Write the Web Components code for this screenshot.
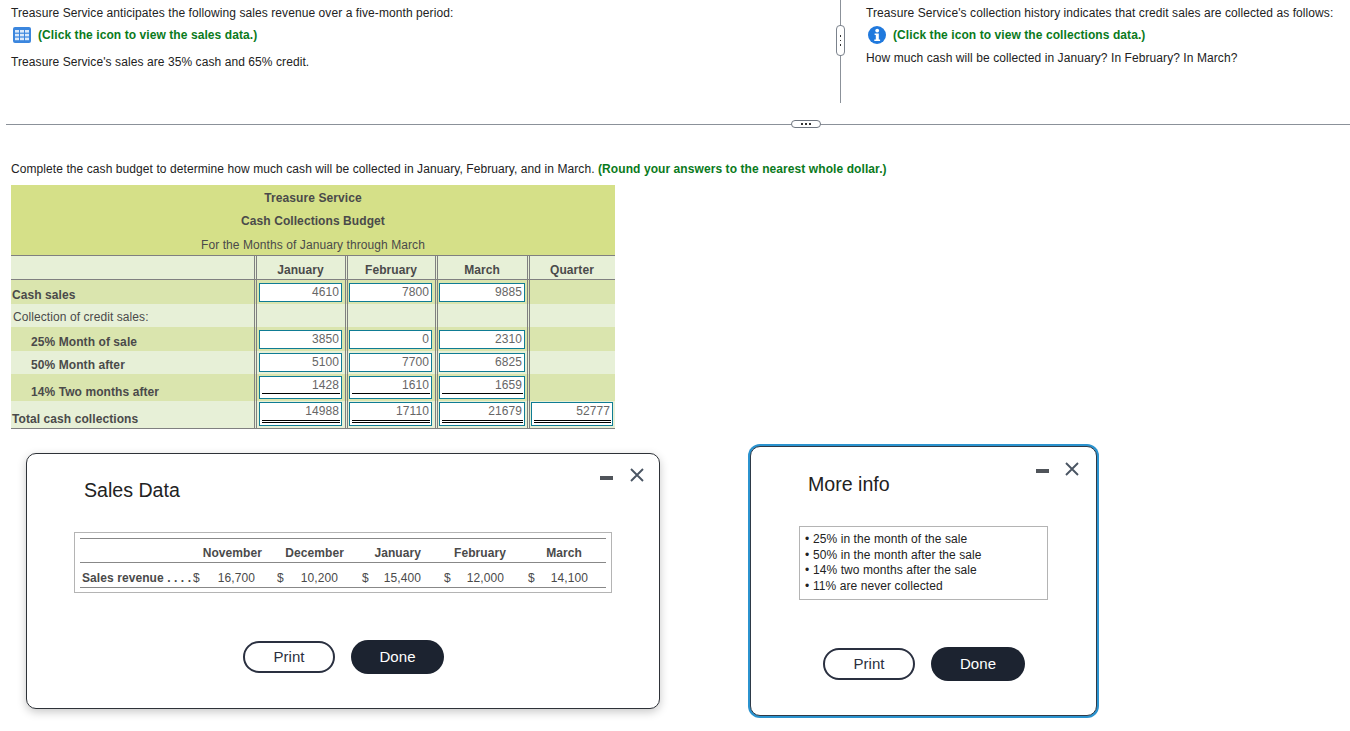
<!DOCTYPE html>
<html><head><meta charset="utf-8"><title>Cash Collections Budget</title>
<style>
html,body{margin:0;padding:0;background:#fff;font:12px/14px "Liberation Sans",Arial,sans-serif;letter-spacing:.08px;color:#222;overflow:hidden}
</style></head><body>
<ts-app>
  <ts-top>
    <ts-pane slot="left" style="--pl:11px">
      <ts-line>Treasure Service anticipates the following sales revenue over a five-month period:</ts-line>
      <ts-hint icon="table" style="--mt:6px;--gap:7px;--il:2px">(Click the icon to view the sales data.)</ts-hint>
      <ts-line style="--mt:12px">Treasure Service's sales are 35% cash and 65% credit.</ts-line>
    </ts-pane>
    <ts-pane slot="right" style="--pl:25px">
      <ts-line>Treasure Service's collection history indicates that credit sales are collected as follows:</ts-line>
      <ts-hint icon="info" style="--mt:6px;--gap:7px;--il:2px">(Click the icon to view the collections data.)</ts-hint>
      <ts-line style="--mt:8px">How much cash will be collected in January? In February? In March?</ts-line>
    </ts-pane>
  </ts-top>
  <ts-splitter></ts-splitter>
  <ts-instruction>Complete the cash budget to determine how much cash will be collected in January, February, and in March. <b slot="note">(Round your answers to the nearest whole dollar.)</b></ts-instruction>
  <ts-budget>
    <b slot="company">Treasure Service</b>
    <b slot="name">Cash Collections Budget</b>
    <span slot="period">For the Months of January through March</span>
    <ts-row tone="light" line style="--h:24px">
      <ts-label></ts-label><ts-cell head>January</ts-cell><ts-cell head>February</ts-cell><ts-cell head>March</ts-cell><ts-cell head>Quarter</ts-cell>
    </ts-row>
    <ts-row tone="dark" style="--h:24px">
      <ts-label bold>Cash sales</ts-label>
      <ts-cell first><ts-amount>4610</ts-amount></ts-cell><ts-cell><ts-amount>7800</ts-amount></ts-cell><ts-cell wide><ts-amount>9885</ts-amount></ts-cell><ts-cell></ts-cell>
    </ts-row>
    <ts-row tone="light" style="--h:23px">
      <ts-label style="--pl:2px;--pb:3px">Collection of credit sales:</ts-label>
      <ts-cell></ts-cell><ts-cell></ts-cell><ts-cell></ts-cell><ts-cell></ts-cell>
    </ts-row>
    <ts-row tone="dark" style="--h:24px">
      <ts-label bold style="--pl:20px">25% Month of sale</ts-label>
      <ts-cell first><ts-amount style="--mt:3px">3850</ts-amount></ts-cell><ts-cell><ts-amount style="--mt:3px">0</ts-amount></ts-cell><ts-cell wide><ts-amount style="--mt:3px">2310</ts-amount></ts-cell><ts-cell></ts-cell>
    </ts-row>
    <ts-row tone="light" style="--h:23px">
      <ts-label bold style="--pl:20px">50% Month after</ts-label>
      <ts-cell first><ts-amount style="--mt:2px">5100</ts-amount></ts-cell><ts-cell><ts-amount style="--mt:2px">7700</ts-amount></ts-cell><ts-cell wide><ts-amount style="--mt:2px">6825</ts-amount></ts-cell><ts-cell></ts-cell>
    </ts-row>
    <ts-row tone="dark" style="--h:27px">
      <ts-label bold style="--pl:20px">14% Two months after</ts-label>
      <ts-cell first><ts-amount rule="single">1428</ts-amount></ts-cell><ts-cell><ts-amount rule="single">1610</ts-amount></ts-cell><ts-cell wide><ts-amount rule="single">1659</ts-amount></ts-cell><ts-cell></ts-cell>
    </ts-row>
    <ts-row tone="light" line style="--h:28px">
      <ts-label bold style="--pb:3px">Total cash collections</ts-label>
      <ts-cell first><ts-amount rule="double">14988</ts-amount></ts-cell><ts-cell><ts-amount rule="double">17110</ts-amount></ts-cell><ts-cell wide><ts-amount rule="double">21679</ts-amount></ts-cell><ts-cell wide><ts-amount rule="double">52777</ts-amount></ts-cell>
    </ts-row>
  </ts-budget>

  <ts-dialog heading="Sales Data" style="--x:26px;--y:453px;--w:634px;--h:256px;--title-l:57px;--title-t:24px;--dash-x:573px;--dash-y:22px;--close-x:603px;--close-y:14px;--body-t:78px;--body-l:47px;--foot-t:186px;--foot-l:216px;--done-w:93px">
    <ts-sales></ts-sales>
  </ts-dialog>
  <ts-dialog focused heading="More info" style="--x:750px;--y:446px;--w:347px;--h:270px;--title-l:57px;--title-t:25px;--dash-x:285px;--dash-y:22px;--close-x:314px;--close-y:15px;--body-t:79px;--body-l:48px;--foot-t:200px;--foot-l:72px;--done-w:94px">
    <ts-notes>
      <li>25% in the month of the sale</li>
      <li>50% in the month after the sale</li>
      <li>14% two months after the sale</li>
      <li>11% are never collected</li>
    </ts-notes>
  </ts-dialog>
</ts-app>
<script>
const def=(name,css,html,extra)=>{
  customElements.define(name,class extends HTMLElement{
    constructor(){super();const r=this.attachShadow({mode:'open'});r.innerHTML=`<style>${css}</style>${typeof html==='function'?html(this):html}`;}
    connectedCallback(){extra&&extra(this)}
  });
};
def('ts-app',`:host{display:block;position:relative;width:1350px;height:731px;overflow:hidden}`,`<slot></slot>`);
def('ts-top',`:host{display:flex;height:103px}
 .l{width:840px;flex:none}.d{width:1px;background:#8b9199;position:relative;flex:none}
 .h{position:absolute;left:-4px;top:25px;width:7px;height:29px;border:1px solid #7b828c;border-radius:4px;background:#fff;display:flex;flex-direction:column;align-items:center;justify-content:center;gap:3px}
 .h i{width:1.5px;height:1.5px;background:#333;display:block}
 .r{flex:1}`,
 `<div class="l"><slot name="left"></slot></div><div class="d"><div class="h"><i></i><i></i><i></i></div></div><div class="r"><slot name="right"></slot></div>`);
def('ts-pane',`:host{display:block;padding:6px 0 0 var(--pl,0)}`,`<slot></slot>`);
def('ts-line',`:host{display:block;margin-top:var(--mt,0);color:#222;white-space:nowrap}`,`<slot></slot>`);
const tableIcon=`<svg width="18" height="16" viewBox="0 0 18 16"><rect width="18" height="16" rx="2" fill="#3b86de"/><g fill="#dbe9fa"><rect x="2" y="3" width="4" height="2.6"/><rect x="7" y="3" width="4" height="2.6"/><rect x="12" y="3" width="4" height="2.6"/><rect x="2" y="6.8" width="4" height="2.6"/><rect x="7" y="6.8" width="4" height="2.6"/><rect x="12" y="6.8" width="4" height="2.6"/><rect x="2" y="10.6" width="4" height="2.6"/><rect x="7" y="10.6" width="4" height="2.6"/><rect x="12" y="10.6" width="4" height="2.6"/></g></svg>`;
const infoIcon=`<svg width="18" height="18" viewBox="0 0 18 18"><circle cx="9" cy="9" r="9" fill="#2079dd"/><circle cx="9.2" cy="4.6" r="1.9" fill="#fff"/><path d="M6.6 7.4h4.2v6h1.3v1.6H6.3v-1.6h1.5V9H6.6z" fill="#fff"/></svg>`;
def('ts-hint',`:host{display:flex;align-items:center;margin-top:var(--mt,0);margin-left:var(--il,0);gap:var(--gap,7px);height:17px;color:#0a7a1c;font-weight:bold;white-space:nowrap}
 svg{display:block;flex:none}`,h=>`${h.getAttribute('icon')==='info'?infoIcon:tableIcon}<span><slot></slot></span>`);
def('ts-splitter',`:host{display:block;position:relative;height:1px;margin:21px 0 0 6px;background:#8b9199}
 .h{position:absolute;left:785px;top:-4px;width:28px;height:6px;border:1px solid #6f7680;border-radius:4px;background:#fff;display:flex;align-items:center;justify-content:center;gap:2px}
 i{width:2px;height:2px;background:#333;display:block}`,`<div class="h"><i></i><i></i><i></i></div>`);
def('ts-instruction',`:host{display:block;margin:37px 0 0 11px;color:#222;white-space:nowrap}
 ::slotted(b){color:#0a7a1c}`,`<slot></slot> <slot name="note"></slot>`);
def('ts-budget',`:host{display:block;width:604px;margin:9px 0 0 11px;color:#4a4a4a}
 .band{background:#d5e088;height:69px;padding-top:1px;border-bottom:1px solid #808080;text-align:center;display:grid;grid-template-rows:23px 23px 24px;align-items:center}
 .p{position:relative;top:1px}`,
 `<div class="band"><div><slot name="company"></slot></div><div><slot name="name"></slot></div><div class="p"><slot name="period"></slot></div></div><slot></slot>`);
def('ts-row',`:host{display:grid;grid-template-columns:243px 91px 90px 92px 88px;height:var(--h);background:#e7f0d7}
 :host([tone=dark]){background:#dae5ae}
 :host([line]){box-shadow:inset 0 -1px #808080}`,`<slot></slot>`);
def('ts-label',`:host{display:flex;align-items:flex-end;padding:0 0 var(--pb,2px) var(--pl,1px);white-space:nowrap}
 :host([bold]){font-weight:bold}`,`<slot></slot>`);
def('ts-cell',`:host{display:block;border-left:3px double #808080;padding:0 3px 0 1px;min-width:0}
 :host([first]){padding-left:2px}
 :host([wide]){padding-right:2px}
 :host([head]){display:flex;align-items:center;justify-content:center;padding:4px 1px 0 0;font-weight:bold}`,`<slot></slot>`);
def('ts-amount',`:host{display:block;position:relative;box-sizing:border-box;height:19px;margin-top:var(--mt,3px);border:1px solid #0f7c94;background:#fff;color:#666;text-align:right;padding:0 2px 0 0;line-height:17px}
 :host([rule=single]){height:23px;margin-top:2px}
 :host([rule=double]){height:24px;margin-top:1px}
 .u{position:absolute;left:2px;right:1px;display:none}
 :host([rule=single]) .u{display:block;top:16px;height:1px;background:#000}
 :host([rule=double]) .u{display:block;top:17px;height:1px;border-top:1px solid #000;border-bottom:1px solid #000}`,`<slot></slot><div class="u"></div>`);
def('ts-button',`:host{display:flex;box-sizing:border-box;width:92px;height:32px;border:2px solid #2a3040;border-radius:16px;align-items:center;justify-content:center;font-size:15px;color:#2a3040;background:#fff}
 :host([primary]){width:var(--done-w,93px);height:34px;border:0;border-radius:17px;background:#1c2330;color:#fff}`,`<slot></slot>`);
def('ts-dialog',`:host{display:block;position:absolute;left:var(--x);top:var(--y);width:var(--w);height:var(--h);box-sizing:border-box;background:#fff;border:1px solid #2e3238;border-radius:10px;box-shadow:0 3px 10px rgba(0,0,0,.22)}
 :host([focused]){border:1px solid #2e3a48;box-shadow:0 0 0 2px #2b93cf}
 h2{position:absolute;margin:0;left:var(--title-l);top:var(--title-t);font:19.6px/24px "Liberation Sans",Arial,sans-serif;letter-spacing:0;font-weight:normal;color:#222}
 .dash{position:absolute;left:var(--dash-x);top:var(--dash-y);width:13px;height:4px;background:#50545a}
 svg{position:absolute;left:var(--close-x);top:var(--close-y)}
 .b{position:absolute;left:var(--body-l);top:var(--body-t)}
 .f{position:absolute;left:var(--foot-l);top:var(--foot-t);display:flex;align-items:center;gap:16px}`,
 h=>`<h2>${h.getAttribute('heading')}</h2><div class="dash"></div><svg width="14" height="14" viewBox="0 0 14 14"><path d="M1 1l12 12M13 1L1 13" stroke="#4a5563" stroke-width="1.9" fill="none"/></svg><div class="b"><slot></slot></div><div class="f"><ts-button>Print</ts-button><ts-button primary>Done</ts-button></div>`);
def('ts-sales',`:host{display:block;box-sizing:border-box;width:538px;height:61px;border:1px solid #b4b4b4;padding:5px;color:#4a4a4a;white-space:nowrap}
 .g{display:grid;grid-template-columns:113px 84px 85px 82px 84px 78px;border-top:1px solid #888}
 .h{font-weight:bold;text-align:right;height:23px;line-height:29px;border-bottom:1px solid #888}
 .v{display:flex;justify-content:space-between;height:24px;line-height:30px;border-bottom:1px solid #888}
 .l{font-weight:bold;padding-left:2px}`,
 `<div class="g">
  <div class="h"></div>
  <div class="h" style="padding-right:15px">November</div><div class="h" style="padding-right:18px">December</div><div class="h" style="padding-right:23px">January</div><div class="h" style="padding-right:22px">February</div><div class="h" style="padding-right:24px">March</div>
  <div class="v l">Sales revenue . . . .</div>
  <div class="v" style="padding-right:22px"><span>$</span><span>16,700</span></div><div class="v" style="padding-right:24px"><span>$</span><span>10,200</span></div><div class="v" style="padding-right:23px"><span>$</span><span>15,400</span></div><div class="v" style="padding-right:24px"><span>$</span><span>12,000</span></div><div class="v" style="padding-right:18px"><span>$</span><span>14,100</span></div>
 </div>`);
def('ts-notes',`:host{display:block;box-sizing:border-box;width:249px;height:74px;border:1px solid #b4b4b4;padding:5px 0 0 5px;color:#222;line-height:15.6px;white-space:nowrap}
 ::slotted(li){list-style:none;position:relative;padding-left:8px}
 ::slotted(li)::before{content:"•";position:absolute;left:0;top:0}`,`<slot></slot>`);
</script>
</body></html>
